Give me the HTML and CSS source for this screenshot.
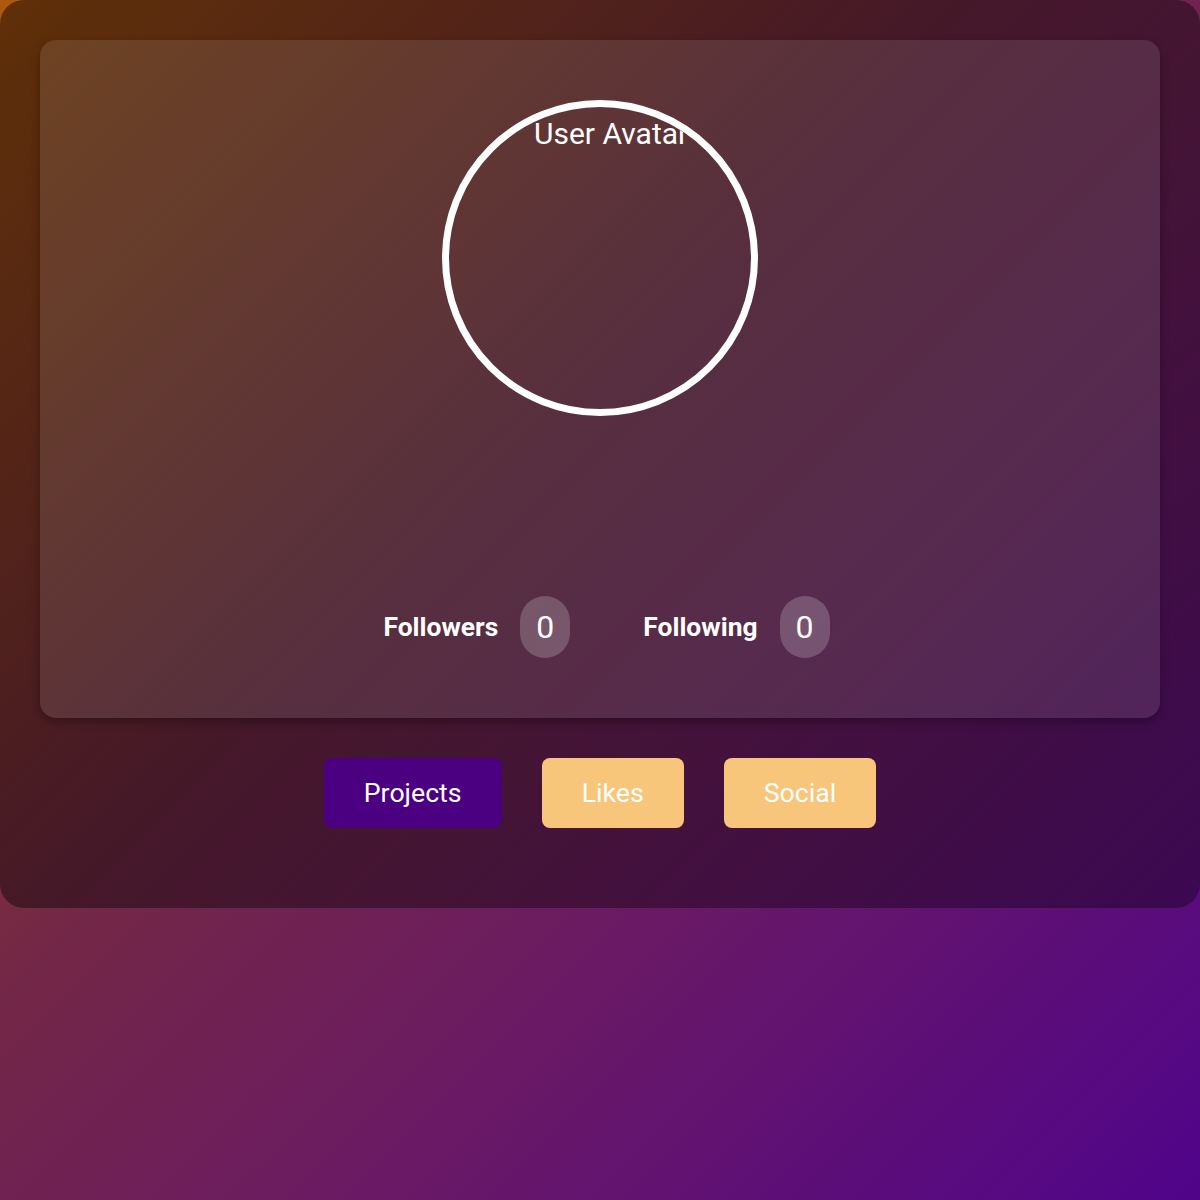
FILE: index.html
```html
<!DOCTYPE html>
<html lang="en">
<head>
<meta charset="utf-8">
<title>Profile</title>
<link rel="stylesheet" href="styles.css">
</head>
<body>
<div class="profile">
  <section class="card">
    <div class="avatar"><span class="avatar-alt">User Avatar</span></div>
    <div class="stats">
      <div class="stat">
        <span class="stat-label">Followers</span>
        <span class="stat-count">0</span>
      </div>
      <div class="stat">
        <span class="stat-label">Following</span>
        <span class="stat-count">0</span>
      </div>
    </div>
  </section>
  <nav class="tabs">
    <button class="tab tab-active">Projects</button>
    <button class="tab">Likes</button>
    <button class="tab">Social</button>
  </nav>
</div>
</body>
</html>
```

FILE: styles.css
```css
html, body {
  margin: 0;
  padding: 0;
}
body {
  min-height: 100vh;
  background: linear-gradient(135deg, #b0580e 0%, #742844 40%, #6a1a64 65%, #50048a 100%);
  font-family: Roboto, "Liberation Sans", sans-serif;
  color: #fff;
}
.profile {
  background: linear-gradient(135deg, rgba(0, 0, 0, 0.46), rgba(0, 0, 0, 0.34));
  border-radius: 24px;
  padding: 40px 40px 80px;
  display: flex;
  flex-direction: column;
  gap: 40px;
}
.card {
  background: rgba(255, 255, 255, 0.1);
  border-radius: 16px;
  box-shadow: 0 4px 10px rgba(0, 0, 0, 0.3);
  padding: 60px 0;
  display: flex;
  flex-direction: column;
  align-items: center;
}
.avatar {
  width: 302px;
  height: 302px;
  border: 7px solid #fff;
  border-radius: 50%;
  overflow: hidden;
  box-sizing: content-box;
}
.avatar-alt {
  display: block;
  padding: 9px 0 0 85px;
  font-size: 30px;
  line-height: 36px;
  white-space: nowrap;
}
.stats {
  margin-top: 180px;
  display: flex;
  justify-content: center;
  gap: 73px;
  padding-left: 13px;
}
.stat {
  display: flex;
  align-items: center;
  gap: 22px;
}
.stat-label {
  font-size: 26.4px;
  font-weight: 700;
}
.stat-count {
  background: rgba(255, 255, 255, 0.2);
  border-radius: 25px;
  padding: 12px 16px;
  font-size: 32px;
  line-height: 38px;
}
.tabs {
  display: flex;
  justify-content: center;
  gap: 40px;
}
.tab {
  font-family: Roboto, "Liberation Sans", sans-serif;
  font-size: 26.7px;
  line-height: 30px;
  padding: 20px 40px;
  border: none;
  border-radius: 8px;
  background: #f7c67a;
  color: #fff;
}
.tab-active {
  background: #4b0082;
}
```
